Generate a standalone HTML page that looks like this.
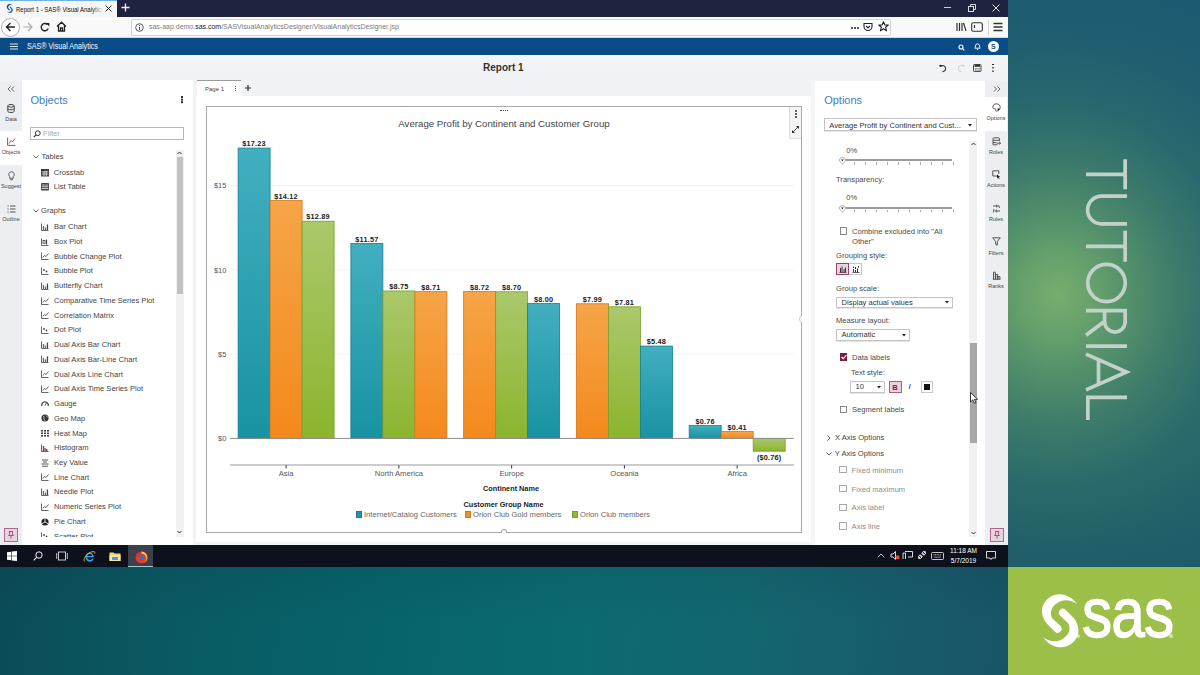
<!DOCTYPE html>
<html><head><meta charset="utf-8">
<style>
*{margin:0;padding:0;box-sizing:border-box}
html,body{width:1200px;height:675px;overflow:hidden}
body{position:relative;font-family:"Liberation Sans",sans-serif;background:#0d5560;color:#333}
.a{position:absolute}
.t{position:absolute;white-space:nowrap;line-height:1}
svg{position:absolute;overflow:visible}
</style></head><body>

<div class="a" style="left:1008px;top:0px;width:192px;height:567px;background:radial-gradient(ellipse 290px 320px at 50px 295px,rgba(118,174,110,1) 0%,rgba(108,166,108,0.93) 12%,rgba(94,155,106,0.78) 26%,rgba(78,140,105,0.58) 42%,rgba(60,124,106,0.36) 60%,rgba(48,110,108,0.15) 80%,rgba(40,100,108,0) 100%),linear-gradient(to bottom,#1c5a71 0%,#1f5d70 25%,#25626e 50%,#22606b 80%,#1e5b68 100%);"></div>
<div class="a" style="left:0px;top:567px;width:1200px;height:108px;background:linear-gradient(to bottom,rgba(10,40,60,0.10) 0%,rgba(10,40,60,0) 50%),linear-gradient(96deg,#0a4c57 0%,#0a5962 14%,#07646b 33%,#0b6a70 48%,#13666f 62%,#18596a 78%,#1a4e60 92%,#1a4b5e 100%);"></div>
<div class="a" style="left:1008px;top:567px;width:192px;height:108px;background:#9cbf4a;"></div>
<div class="a" style="left:0;top:0;width:1008px;height:567px;background:#eef0f3;overflow:hidden">
<!-- tab bar -->
<div class="a" style="left:0;top:0;width:1008px;height:17px;background:#202340"></div>
<div class="a" style="left:0;top:0;width:117px;height:17px;background:#f5f6f7;border-top:1px solid #6fb2e2"></div>
<svg class="a" style="left:5.5px;top:3.8px" width="7.5" height="9" viewBox="-18.5 -27 37 54"><g fill="#1a4f8f"><path d="M16.9,-16.5 C12,-24 4,-27 -2,-26.5 C-12,-25.5 -19,-17 -18.2,-8.5 C-17.8,-3.5 -15.5,0.5 -13,3.2 L-5.3,11 A4,4 0 0 0 0.3,5.3 L-7.5,-2 C-9.5,-4.5 -10,-8 -8.5,-11.5 C-6,-17.5 1,-21 7,-20.5 C11,-20 14.5,-18.5 16.9,-16.5 Z"/><path transform="rotate(180)" fill="#1b6fa8" d="M16.9,-16.5 C12,-24 4,-27 -2,-26.5 C-12,-25.5 -19,-17 -18.2,-8.5 C-17.8,-3.5 -15.5,0.5 -13,3.2 L-5.3,11 A4,4 0 0 0 0.3,5.3 L-7.5,-2 C-9.5,-4.5 -10,-8 -8.5,-11.5 C-6,-17.5 1,-21 7,-20.5 C11,-20 14.5,-18.5 16.9,-16.5 Z"/></g></svg>
<div class="a" style="left:16px;top:3px;width:86px;height:12px;overflow:hidden"><div class="t" style="left:0;top:2.6px;font-size:7.2px;color:#111;transform:scaleX(0.835);transform-origin:0 0">Report 1 - SAS® Visual Analytics</div></div>
<div class="a" style="left:92px;top:2px;width:12px;height:13px;background:linear-gradient(to right,rgba(245,246,247,0),#f5f6f7)"></div>
<svg class="a" style="left:105px;top:5px" width="7" height="7" viewBox="0 0 7 7"><path d="M0.5 0.5L6.5 6.5M6.5 0.5L0.5 6.5" stroke="#222" stroke-width="1"/></svg>
<svg class="a" style="left:121px;top:3px" width="9" height="9" viewBox="0 0 9 9"><path d="M4.5 0.5V8.5M0.5 4.5H8.5" stroke="#eee" stroke-width="1.3"/></svg>
<!-- window controls -->
<div class="a" style="left:944px;top:7px;width:7px;height:1px;background:#ccc"></div>
<svg class="a" style="left:968px;top:4px" width="8" height="8" viewBox="0 0 8 8"><rect x="0.5" y="2.5" width="5" height="5" fill="none" stroke="#ddd" stroke-width="1"/><path d="M2.5 2.5V0.5H7.5V5.5H5.5" fill="none" stroke="#ddd" stroke-width="1"/></svg>
<svg class="a" style="left:992px;top:4px" width="8" height="8" viewBox="0 0 8 8"><path d="M0.5 0.5L7.5 7.5M7.5 0.5L0.5 7.5" stroke="#ddd" stroke-width="1"/></svg>

<!-- nav bar -->
<div class="a" style="left:0;top:17px;width:1008px;height:21px;background:#f9f9fa;border-bottom:1px solid #d7d7db"></div>
<div class="a" style="left:1px;top:18px;width:19px;height:19px;border-radius:50%;border:1px solid #b1b1b3;background:#fff"></div>
<svg class="a" style="left:5px;top:22px" width="11" height="10" viewBox="0 0 11 10"><path d="M10 5H1.5M5.5 1L1.5 5L5.5 9" fill="none" stroke="#222" stroke-width="1.4"/></svg>
<svg class="a" style="left:23px;top:22px" width="11" height="10" viewBox="0 0 11 10"><path d="M0.5 5H9M5 1L9 5L5 9" fill="none" stroke="#aaa" stroke-width="1.1"/></svg>
<svg class="a" style="left:40px;top:22px" width="11" height="11" viewBox="0 0 11 11"><path d="M8.2 6.5A3.6 3.6 0 1 1 7.4 2.6" fill="none" stroke="#222" stroke-width="1.4"/><path d="M5.8 1H9.4V4.6Z" fill="#222"/></svg>
<svg class="a" style="left:56px;top:21px" width="11" height="11" viewBox="0 0 11 11"><path d="M1 5.5L5.5 1.2L10 5.5M2.5 4.5V10H8.5V4.5M4.5 10V7H6.5V10" fill="none" stroke="#222" stroke-width="1.3"/></svg>
<div class="a" style="left:131px;top:19px;width:760px;height:17px;background:#fff;border:1px solid #d4d4d6;border-radius:2px"></div>
<svg class="a" style="left:135px;top:23px" width="9" height="9" viewBox="0 0 9 9"><circle cx="4.5" cy="4.5" r="3.8" fill="none" stroke="#555" stroke-width="1"/><path d="M4.5 3.8V7" stroke="#555" stroke-width="1.1"/><circle cx="4.5" cy="2.4" r="0.6" fill="#555"/></svg>
<div class="t" style="left:148.5px;top:23.4px;font-size:7.8px;color:#7a7a7a;transform:scaleX(0.895);transform-origin:0 0">sas-aap.demo.<span style="color:#222">sas.com</span>/SASVisualAnalyticsDesigner/VisualAnalyticsDesigner.jsp</div>
<div class="a" style="left:851px;top:26.5px;width:2px;height:2px;border-radius:1px;background:#222;box-shadow:3px 0 0 #222,6px 0 0 #222"></div>
<svg class="a" style="left:863px;top:22px" width="10" height="10" viewBox="0 0 10 10"><path d="M1 1.5H9V4.5A4 4 0 0 1 1 4.5Z" fill="none" stroke="#222" stroke-width="1.1"/><path d="M3 4L5 6L7 4" fill="none" stroke="#222" stroke-width="1.1"/></svg>
<svg class="a" style="left:878px;top:21px" width="11" height="11" viewBox="0 0 11 11"><path d="M5.5 0.8L6.9 4H10.3L7.6 6.2L8.6 9.8L5.5 7.8L2.4 9.8L3.4 6.2L0.7 4H4.1Z" fill="none" stroke="#222" stroke-width="1.1" stroke-linejoin="round"/></svg>
<svg class="a" style="left:956px;top:22px" width="11" height="10" viewBox="0 0 11 10"><path d="M1 1V9M3.5 1V9M6 1V9M7.5 1L10 9" fill="none" stroke="#333" stroke-width="1.2"/></svg>
<svg class="a" style="left:971px;top:22px" width="12" height="10" viewBox="0 0 12 10"><rect x="0.7" y="0.7" width="10.6" height="8.6" rx="1.5" fill="none" stroke="#333" stroke-width="1.1"/><path d="M3.5 3V6" stroke="#333" stroke-width="1.2"/></svg>
<div class="a" style="left:988px;top:20px;width:1px;height:15px;background:#d7d7db"></div>
<svg class="a" style="left:993px;top:22px" width="10" height="10" viewBox="0 0 10 10"><path d="M0.5 1.5H9.5M0.5 5H9.5M0.5 8.5H9.5" stroke="#333" stroke-width="1.3"/></svg>

<!-- SAS header -->
<div class="a" style="left:0;top:38px;width:1008px;height:17px;background:#0a4c87"></div>
<svg class="a" style="left:10px;top:43px" width="8" height="7" viewBox="0 0 8 7"><path d="M0 1H8M0 3.5H8M0 6H8" stroke="#dfe8f2" stroke-width="1.1"/></svg>
<div class="t" style="left:27px;top:43.4px;font-size:8.2px;color:#fff;transform:scaleX(0.87);transform-origin:0 0">SAS® Visual Analytics</div>
<svg class="a" style="left:958px;top:43.5px" width="7" height="7" viewBox="0 0 7 7"><circle cx="3" cy="3" r="2" fill="none" stroke="#fff" stroke-width="1.1"/><path d="M4.4 4.4L6.3 6.3" stroke="#fff" stroke-width="1.2"/></svg>
<svg class="a" style="left:974px;top:42.8px" width="7" height="7" viewBox="0 0 7 7"><path d="M0.8 5.2H6.2L5.6 4.2V3A2.1 2.1 0 0 0 1.4 3V4.2Z" fill="none" stroke="#fff" stroke-width="0.9"/><circle cx="3.5" cy="6.2" r="0.7" fill="#fff"/></svg>
<div class="a" style="left:988px;top:41px;width:11px;height:11px;border-radius:50%;background:#fff"></div>
<div class="t" style="left:991px;top:43px;font-size:7px;color:#0b4f8b;font-weight:bold">S</div>

<!-- report bar -->
<div class="a" style="left:0;top:55px;width:1008px;height:25px;background:linear-gradient(to bottom,#fafbfc 0px,#f3f4f6 2px,#f1f2f5 25px)"></div>
<div class="t" style="left:483px;top:63.1px;font-size:10px;color:#333;font-weight:bold">Report 1</div>
<svg class="a" style="left:939px;top:64px" width="9" height="8" viewBox="0 0 9 8"><path d="M1.8 2.2A3 3 0 1 1 3.5 7.6" fill="none" stroke="#333" stroke-width="1.1"/><circle cx="1.4" cy="1.8" r="1.1" fill="#222"/></svg>
<svg class="a" style="left:956px;top:64px" width="9" height="8" viewBox="0 0 9 8"><path d="M7.2 2.2A3 3 0 1 0 5.5 7.6" fill="none" stroke="#d4d4d4" stroke-width="1.1"/><circle cx="7.6" cy="1.8" r="1" fill="#ccc"/></svg>
<svg class="a" style="left:972.5px;top:64px" width="8.5" height="8" viewBox="0 0 8.5 8"><rect x="0.5" y="0.5" width="7.5" height="7" rx="0.8" fill="#eee" stroke="#444" stroke-width="1"/><rect x="1.5" y="1" width="5.5" height="1.8" fill="#333"/><rect x="2.3" y="4.3" width="3.9" height="2.7" fill="#d8c8d0" stroke="#777" stroke-width="0.5"/></svg>
<div class="a" style="left:992.3px;top:63.8px;width:1.6px;height:1.6px;background:#222;box-shadow:0 3.3px 0 #222,0 6.6px 0 #222"></div>


<div class="a" style="left:0px;top:80px;width:1008px;height:465px;background:#f1f2f5;"></div>
<div class="a" style="left:0px;top:81px;width:22px;height:464px;background:#eceef1;"></div>
<div class="a" style="left:0px;top:131px;width:22px;height:34px;background:#ffffff;"></div>
<svg style="left:7px;top:86px" width="8" height="6" viewBox="0 0 8 6"><path d="M3.5 0.5L1 3L3.5 5.5M7 0.5L4.5 3L7 5.5" fill="none" stroke="#555" stroke-width="0.9"/></svg>
<svg style="left:7px;top:104px" width="8" height="9" viewBox="0 0 8 9"><ellipse cx="4" cy="1.8" rx="3.2" ry="1.3" fill="none" stroke="#444" stroke-width="1"/><path d="M0.8 1.8V7.2C0.8 8.9 7.2 8.9 7.2 7.2V1.8M0.8 4.5C0.8 6.2 7.2 6.2 7.2 4.5" fill="none" stroke="#444" stroke-width="1"/></svg>
<div class="t" style="left:-289.00px;width:600px;text-align:center;top:116.84px;font-size:5.5px;color:#444;font-weight:normal;">Data</div>
<svg style="left:7px;top:137px" width="9" height="9" viewBox="0 0 9 9"><path d="M0.6 0.5V8.4H8.5" fill="none" stroke="#555" stroke-width="0.9"/><path d="M2 6.5L4 3.5L5.5 5L8 1.5" fill="none" stroke="#b04070" stroke-width="0.9"/></svg>
<div class="t" style="left:-289.00px;width:600px;text-align:center;top:150.34px;font-size:5.5px;color:#444;font-weight:normal;">Objects</div>
<svg style="left:8px;top:171px" width="7" height="10" viewBox="0 0 7 10"><path d="M3.5 0.7A2.8 2.8 0 0 1 5.3 5.6V7.3H1.7V5.6A2.8 2.8 0 0 1 3.5 0.7Z" fill="none" stroke="#555" stroke-width="0.9"/><path d="M2 8.7H5" stroke="#555" stroke-width="0.9"/></svg>
<div class="t" style="left:-289.00px;width:600px;text-align:center;top:183.84px;font-size:5.5px;color:#444;font-weight:normal;">Suggest</div>
<svg style="left:7px;top:205px" width="9" height="8" viewBox="0 0 9 8"><path d="M0.5 1H1.7M0.5 4H1.7M0.5 7H1.7M3 1H8.5M3 4H8.5M3 7H8.5" stroke="#555" stroke-width="1"/></svg>
<div class="t" style="left:-289.00px;width:600px;text-align:center;top:217.34px;font-size:5.5px;color:#444;font-weight:normal;">Outline</div>
<div class="a" style="left:4px;top:528px;width:14px;height:14px;background:#e8d3e0;border:1px solid #b0688f"></div>
<svg style="left:8px;top:531px" width="6" height="8" viewBox="0 0 6 8"><path d="M1 0.5H5M1.5 0.5V3.5L0.5 4.5H5.5L4.5 3.5V0.5M3 4.5V7.5" fill="none" stroke="#8a3a64" stroke-width="0.8"/></svg>
<div class="a" style="left:22px;top:80px;width:171px;height:465px;background:#ffffff;"></div>
<div class="a" style="left:193px;top:80px;width:3px;height:465px;background:#f0f2f4;"></div>
<div class="t" style="left:30.50px;top:95.09px;font-size:11px;color:#3c7cbd;font-weight:normal;">Objects</div>
<div class="a" style="left:181.2px;top:96.3px;width:1.6px;height:1.6px;background:#333;box-shadow:0 2.6px 0 #333,0 5.2px 0 #333"></div>
<div class="a" style="left:30px;top:127px;width:154px;height:13px;border:1px solid #b8b8b8;background:#fff"></div>
<svg style="left:33px;top:129.5px" width="8" height="8" viewBox="0 0 8 8"><circle cx="4.8" cy="3.2" r="2.4" fill="none" stroke="#333" stroke-width="1"/><path d="M3.1 4.9L0.8 7.2" stroke="#333" stroke-width="1.2"/></svg>
<div class="t" style="left:43.00px;top:130.07px;font-size:7.6px;color:#aaa;font-weight:normal;">Filter</div>
<svg style="left:32.5px;top:155px" width="6" height="4" viewBox="0 0 6 4"><path d="M0.5 0.5L3 3L5.5 0.5" fill="none" stroke="#555" stroke-width="0.9"/></svg>
<div class="t" style="left:41.50px;top:153.17px;font-size:7.6px;color:#444;font-weight:normal;">Tables</div>
<svg style="left:41px;top:168.5px" width="8" height="7.5" viewBox="0 0 8 7.5"><rect x="0" y="0" width="8" height="7.5" fill="#444"/><path d="M0.8 2.8H7.2M0.8 5H7.2M3 2V7M5.3 2V7" stroke="#fff" stroke-width="0.7"/><rect x="0.7" y="0.7" width="2" height="1.3" fill="#111"/></svg>
<div class="t" style="left:53.80px;top:168.57px;font-size:7.6px;color:#444;font-weight:normal;">Crosstab</div>
<svg style="left:41px;top:183px" width="8" height="7.5" viewBox="0 0 8 7.5"><rect x="0" y="0" width="8" height="7.5" rx="0.8" fill="#444"/><path d="M0.8 2.1H7.2M0.8 3.8H7.2M0.8 5.5H7.2" stroke="#fff" stroke-width="0.7"/></svg>
<div class="t" style="left:53.80px;top:183.17px;font-size:7.6px;color:#444;font-weight:normal;">List Table</div>
<svg style="left:32.5px;top:209px" width="6" height="4" viewBox="0 0 6 4"><path d="M0.5 0.5L3 3L5.5 0.5" fill="none" stroke="#555" stroke-width="0.9"/></svg>
<div class="t" style="left:41.00px;top:207.27px;font-size:7.6px;color:#444;font-weight:normal;">Graphs</div>
<svg style="left:41px;top:222.80px" width="8" height="8" viewBox="0 0 8 8"><path d="M0.5 0.5V7.5H7.5" fill="none" stroke="#555" stroke-width="0.9"/><rect x="1.8" y="3" width="1.3" height="4" fill="#b04070"/><rect x="3.8" y="4.5" width="1.3" height="2.5" fill="#3a7ab8"/><rect x="5.8" y="1.5" width="1.3" height="5.5" fill="#444"/></svg>
<div class="t" style="left:54.00px;top:223.17px;font-size:7.6px;color:#444;font-weight:normal;">Bar Chart</div>
<svg style="left:41px;top:237.54px" width="8" height="8" viewBox="0 0 8 8"><path d="M0.5 0.5V7.5H7.5" fill="none" stroke="#555" stroke-width="0.9"/><rect x="2" y="2.5" width="2" height="3" fill="none" stroke="#444" stroke-width="0.8"/><path d="M5.5 1.5V6.5" stroke="#444" stroke-width="1.2"/></svg>
<div class="t" style="left:54.00px;top:237.91px;font-size:7.6px;color:#444;font-weight:normal;">Box Plot</div>
<svg style="left:41px;top:252.28px" width="8" height="8" viewBox="0 0 8 8"><path d="M0.5 0.5V7.5H7.5" fill="none" stroke="#555" stroke-width="0.9"/><path d="M1.8 5.5L3.5 3.5L5 4.5L7.5 1.5" fill="none" stroke="#555" stroke-width="0.9"/></svg>
<div class="t" style="left:54.00px;top:252.65px;font-size:7.6px;color:#444;font-weight:normal;">Bubble Change Plot</div>
<svg style="left:41px;top:267.02px" width="8" height="8" viewBox="0 0 8 8"><path d="M0.5 0.5V7.5H7.5" fill="none" stroke="#555" stroke-width="0.9"/><circle cx="3" cy="3" r="0.9" fill="#444"/><circle cx="5.5" cy="4.5" r="0.9" fill="#444"/></svg>
<div class="t" style="left:54.00px;top:267.39px;font-size:7.6px;color:#444;font-weight:normal;">Bubble Plot</div>
<svg style="left:41px;top:281.76px" width="8" height="8" viewBox="0 0 8 8"><path d="M0.5 0.5V7.5H7.5" fill="none" stroke="#555" stroke-width="0.9"/><rect x="1.8" y="3" width="1.3" height="4" fill="#b04070"/><rect x="3.8" y="4.5" width="1.3" height="2.5" fill="#3a7ab8"/><rect x="5.8" y="1.5" width="1.3" height="5.5" fill="#444"/></svg>
<div class="t" style="left:54.00px;top:282.13px;font-size:7.6px;color:#444;font-weight:normal;">Butterfly Chart</div>
<svg style="left:41px;top:296.50px" width="8" height="8" viewBox="0 0 8 8"><path d="M0.5 0.5V7.5H7.5" fill="none" stroke="#555" stroke-width="0.9"/><path d="M1.8 5.5L3.5 3.5L5 4.5L7.5 1.5" fill="none" stroke="#555" stroke-width="0.9"/></svg>
<div class="t" style="left:54.00px;top:296.87px;font-size:7.6px;color:#444;font-weight:normal;">Comparative Time Series Plot</div>
<svg style="left:41px;top:311.24px" width="8" height="8" viewBox="0 0 8 8"><path d="M0.5 0.5V7.5H7.5" fill="none" stroke="#555" stroke-width="0.9"/><path d="M1.8 5.5L3.5 3.5L5 4.5L7.5 1.5" fill="none" stroke="#555" stroke-width="0.9"/></svg>
<div class="t" style="left:54.00px;top:311.61px;font-size:7.6px;color:#444;font-weight:normal;">Correlation Matrix</div>
<svg style="left:41px;top:325.98px" width="8" height="8" viewBox="0 0 8 8"><path d="M0.5 0.5V7.5H7.5" fill="none" stroke="#555" stroke-width="0.9"/><circle cx="3" cy="3" r="0.9" fill="#444"/><circle cx="5.5" cy="4.5" r="0.9" fill="#444"/></svg>
<div class="t" style="left:54.00px;top:326.35px;font-size:7.6px;color:#444;font-weight:normal;">Dot Plot</div>
<svg style="left:41px;top:340.72px" width="8" height="8" viewBox="0 0 8 8"><path d="M0.5 0.5V7.5H7.5" fill="none" stroke="#555" stroke-width="0.9"/><rect x="1.8" y="3" width="1.3" height="4" fill="#b04070"/><rect x="3.8" y="4.5" width="1.3" height="2.5" fill="#3a7ab8"/><rect x="5.8" y="1.5" width="1.3" height="5.5" fill="#444"/></svg>
<div class="t" style="left:54.00px;top:341.09px;font-size:7.6px;color:#444;font-weight:normal;">Dual Axis Bar Chart</div>
<svg style="left:41px;top:355.46px" width="8" height="8" viewBox="0 0 8 8"><path d="M0.5 0.5V7.5H7.5" fill="none" stroke="#555" stroke-width="0.9"/><rect x="1.8" y="3" width="1.3" height="4" fill="#b04070"/><rect x="3.8" y="4.5" width="1.3" height="2.5" fill="#3a7ab8"/><rect x="5.8" y="1.5" width="1.3" height="5.5" fill="#444"/></svg>
<div class="t" style="left:54.00px;top:355.83px;font-size:7.6px;color:#444;font-weight:normal;">Dual Axis Bar-Line Chart</div>
<svg style="left:41px;top:370.20px" width="8" height="8" viewBox="0 0 8 8"><path d="M0.5 0.5V7.5H7.5" fill="none" stroke="#555" stroke-width="0.9"/><path d="M1.8 5.5L3.5 3.5L5 4.5L7.5 1.5" fill="none" stroke="#555" stroke-width="0.9"/></svg>
<div class="t" style="left:54.00px;top:370.57px;font-size:7.6px;color:#444;font-weight:normal;">Dual Axis Line Chart</div>
<svg style="left:41px;top:384.94px" width="8" height="8" viewBox="0 0 8 8"><path d="M0.5 0.5V7.5H7.5" fill="none" stroke="#555" stroke-width="0.9"/><path d="M1.8 5.5L3.5 3.5L5 4.5L7.5 1.5" fill="none" stroke="#555" stroke-width="0.9"/></svg>
<div class="t" style="left:54.00px;top:385.31px;font-size:7.6px;color:#444;font-weight:normal;">Dual Axis Time Series Plot</div>
<svg style="left:41px;top:399.68px" width="8" height="8" viewBox="0 0 8 8"><path d="M0.8 6A3.3 3.3 0 1 1 7.2 6" fill="none" stroke="#444" stroke-width="1.3"/><path d="M4 5.5L5.5 3" stroke="#444" stroke-width="0.9"/></svg>
<div class="t" style="left:54.00px;top:400.05px;font-size:7.6px;color:#444;font-weight:normal;">Gauge</div>
<svg style="left:41px;top:414.42px" width="8" height="8" viewBox="0 0 8 8"><circle cx="4" cy="4" r="3.6" fill="#333"/><path d="M2 2.5C3 2 3.5 3.5 2.8 4.5C2.5 5.5 4 6 4.5 7M5 1.5C5.5 2.5 6.5 2.5 6.8 3.5" fill="none" stroke="#fff" stroke-width="0.7"/></svg>
<div class="t" style="left:54.00px;top:414.79px;font-size:7.6px;color:#444;font-weight:normal;">Geo Map</div>
<svg style="left:41px;top:429.16px" width="8" height="8" viewBox="0 0 8 8"><g fill="#444"><rect x="0" y="1" width="2" height="1.6"/><rect x="3" y="1" width="2" height="1.6"/><rect x="6" y="1" width="2" height="1.6"/><rect x="0" y="3.5" width="2" height="1.6"/><rect x="3" y="3.5" width="2" height="1.6"/><rect x="6" y="3.5" width="2" height="1.6"/><rect x="0" y="6" width="2" height="1.6"/><rect x="3" y="6" width="2" height="1.6"/><rect x="6" y="6" width="2" height="1.6"/></g></svg>
<div class="t" style="left:54.00px;top:429.53px;font-size:7.6px;color:#444;font-weight:normal;">Heat Map</div>
<svg style="left:41px;top:443.90px" width="8" height="8" viewBox="0 0 8 8"><path d="M0.5 0.5V7.5H7.5" fill="none" stroke="#555" stroke-width="0.9"/><rect x="1.8" y="2" width="1.4" height="5" fill="#555"/><rect x="3.4" y="4" width="1.4" height="3" fill="#b04070"/><rect x="5" y="5" width="1.4" height="2" fill="#555"/></svg>
<div class="t" style="left:54.00px;top:444.27px;font-size:7.6px;color:#444;font-weight:normal;">Histogram</div>
<svg style="left:41px;top:458.64px" width="8" height="8" viewBox="0 0 8 8"><path d="M1 1H7M2 3H6M0.5 5H7.5M1 7.2H7" stroke="#444" stroke-width="0.9"/></svg>
<div class="t" style="left:54.00px;top:459.01px;font-size:7.6px;color:#444;font-weight:normal;">Key Value</div>
<svg style="left:41px;top:473.38px" width="8" height="8" viewBox="0 0 8 8"><path d="M0.5 0.5V7.5H7.5" fill="none" stroke="#555" stroke-width="0.9"/><path d="M1.8 5.5L3.5 3.5L5 4.5L7.5 1.5" fill="none" stroke="#555" stroke-width="0.9"/></svg>
<div class="t" style="left:54.00px;top:473.75px;font-size:7.6px;color:#444;font-weight:normal;">Line Chart</div>
<svg style="left:41px;top:488.12px" width="8" height="8" viewBox="0 0 8 8"><path d="M0.5 0.5V7.5H7.5" fill="none" stroke="#555" stroke-width="0.9"/><rect x="1.8" y="3" width="1.3" height="4" fill="#b04070"/><rect x="3.8" y="4.5" width="1.3" height="2.5" fill="#3a7ab8"/><rect x="5.8" y="1.5" width="1.3" height="5.5" fill="#444"/></svg>
<div class="t" style="left:54.00px;top:488.49px;font-size:7.6px;color:#444;font-weight:normal;">Needle Plot</div>
<svg style="left:41px;top:502.86px" width="8" height="8" viewBox="0 0 8 8"><path d="M0.5 0.5V7.5H7.5" fill="none" stroke="#555" stroke-width="0.9"/><path d="M1.8 5.5L3.5 3.5L5 4.5L7.5 1.5" fill="none" stroke="#555" stroke-width="0.9"/></svg>
<div class="t" style="left:54.00px;top:503.23px;font-size:7.6px;color:#444;font-weight:normal;">Numeric Series Plot</div>
<svg style="left:41px;top:517.60px" width="8" height="8" viewBox="0 0 8 8"><circle cx="4" cy="4" r="3.6" fill="#222"/><path d="M4 4V0.4M4 4L7.2 5.8M4 4L0.8 5.8" stroke="#fff" stroke-width="0.8"/></svg>
<div class="t" style="left:54.00px;top:517.97px;font-size:7.6px;color:#444;font-weight:normal;">Pie Chart</div>
<svg style="left:41px;top:532.34px" width="8" height="8" viewBox="0 0 8 8"><path d="M0.5 0.5V7.5H7.5" fill="none" stroke="#555" stroke-width="0.9"/><circle cx="3" cy="3" r="0.9" fill="#444"/><circle cx="5.5" cy="4.5" r="0.9" fill="#444"/></svg>
<div class="t" style="left:54.00px;top:532.71px;font-size:7.6px;color:#444;font-weight:normal;">Scatter Plot</div>
<div class="a" style="left:22px;top:536.5px;width:171px;height:8.5px;background:#ffffff;"></div>
<div class="a" style="left:175.5px;top:149.5px;width:8px;height:387px;background:#f1f1f1;"></div>
<svg style="left:177px;top:151px" width="5" height="4" viewBox="0 0 5 4"><path d="M0.5 3L2.5 1L4.5 3" fill="none" stroke="#333" stroke-width="1"/></svg>
<div class="a" style="left:176.5px;top:157px;width:6px;height:137px;background:#c1c1c1;"></div>
<svg style="left:177px;top:530px" width="5" height="4" viewBox="0 0 5 4"><path d="M0.5 1L2.5 3L4.5 1" fill="none" stroke="#333" stroke-width="1"/></svg>
<div class="a" style="left:196px;top:80px;width:615px;height:16px;background:#f1f2f5;"></div>
<div class="a" style="left:197px;top:80px;width:44px;height:17px;background:#fff;border-top:1.5px solid #9a9a9a"></div>
<div class="t" style="left:205.00px;top:86.42px;font-size:6px;color:#444;font-weight:normal;">Page 1</div>
<div class="a" style="left:234.5px;top:86px;width:1px;height:1px;background:#666;box-shadow:0 2px 0 #666,0 4px 0 #666"></div>
<svg style="left:244.5px;top:85px" width="6" height="6" viewBox="0 0 6 6"><path d="M3 0V6M0 3H6" stroke="#333" stroke-width="1.2"/></svg>
<div class="a" style="left:196px;top:96px;width:615px;height:446px;background:#ffffff;"></div>
<div class="a" style="left:811px;top:80px;width:4px;height:465px;background:#f4f5f7;"></div>
<div class="a" style="left:815px;top:81px;width:170px;height:464px;background:#ffffff;"></div>
<div class="a" style="left:985px;top:81px;width:23px;height:464px;background:#eceef1;"></div>
<div class="a" style="left:985px;top:97px;width:22px;height:34px;background:#ffffff;"></div>
<svg style="left:993px;top:86px" width="8" height="6" viewBox="0 0 8 6"><path d="M1 0.5L3.5 3L1 5.5M4.5 0.5L7 3L4.5 5.5" fill="none" stroke="#555" stroke-width="0.9"/></svg>
<svg style="left:992px;top:103px" width="9" height="9" viewBox="0 0 9 9"><path d="M4.5 0.8C2.2 0.8 0.8 2.4 0.8 4.3C0.8 5.5 1.7 5.8 2.5 5.6C3.4 5.4 3.8 6.2 3.6 7C3.4 7.8 4 8.3 4.8 8.1C7 7.6 8.2 6 8.2 4.3C8.2 2.2 6.6 0.8 4.5 0.8Z" fill="none" stroke="#444" stroke-width="0.9"/><circle cx="6.5" cy="6.3" r="1" fill="#222"/></svg>
<div class="t" style="left:696.00px;width:600px;text-align:center;top:116.34px;font-size:5.5px;color:#444;font-weight:normal;">Options</div>
<svg style="left:992px;top:137px" width="9" height="9" viewBox="0 0 9 9"><path d="M5.5 7.8H1V1.5A1 1 0 0 1 2 0.8H6.5A1 1 0 0 1 7.5 1.8V3.5M1 3.3H7.5M1 5.6H4.5" fill="none" stroke="#444" stroke-width="0.9"/><path d="M4.8 6.2H8.5M7.2 4.8L8.6 6.2L7.2 7.6" fill="none" stroke="#444" stroke-width="0.9"/></svg>
<div class="t" style="left:696.00px;width:600px;text-align:center;top:149.84px;font-size:5.5px;color:#444;font-weight:normal;">Roles</div>
<svg style="left:992px;top:170px" width="9" height="10" viewBox="0 0 9 10"><path d="M5.5 6H0.8V0.8H6.8V4" fill="none" stroke="#444" stroke-width="0.9"/><path d="M5 4.5L8.2 6.8L6.7 7L7.6 9L7 9.3L6 7.4L5 8.5Z" fill="#222"/></svg>
<div class="t" style="left:696.00px;width:600px;text-align:center;top:183.34px;font-size:5.5px;color:#444;font-weight:normal;">Actions</div>
<svg style="left:992px;top:204px" width="9" height="9" viewBox="0 0 9 9"><path d="M1 2H5.5M4 0.7L5.5 2L4 3.3M8 7H3.5M5 5.7L3.5 7L5 8.3" fill="none" stroke="#444" stroke-width="0.9"/><path d="M6.5 1L7.5 4M2 5L1.5 8.5" stroke="#444" stroke-width="0.9"/></svg>
<div class="t" style="left:696.00px;width:600px;text-align:center;top:217.34px;font-size:5.5px;color:#444;font-weight:normal;">Rules</div>
<svg style="left:992px;top:237px" width="9" height="9" viewBox="0 0 9 9"><path d="M0.7 0.8H8.3L5.3 4.5V8.2L3.7 7.3V4.5Z" fill="none" stroke="#444" stroke-width="0.9" stroke-linejoin="round"/></svg>
<div class="t" style="left:696.00px;width:600px;text-align:center;top:250.84px;font-size:5.5px;color:#444;font-weight:normal;">Filters</div>
<svg style="left:992px;top:271px" width="9" height="9" viewBox="0 0 9 9"><path d="M0.8 8.3H8.5M1.5 8V1.2H3.3V8M3.8 8V3.5H5.6V8M6.1 8V5.5H7.9V8" fill="none" stroke="#444" stroke-width="0.9"/></svg>
<div class="t" style="left:696.00px;width:600px;text-align:center;top:284.34px;font-size:5.5px;color:#444;font-weight:normal;">Ranks</div>
<div class="a" style="left:990px;top:528px;width:14px;height:14px;background:#e8d3e0;border:1px solid #b0688f"></div>
<svg style="left:994px;top:531px" width="6" height="8" viewBox="0 0 6 8"><path d="M1 0.5H5M1.5 0.5V3.5L0.5 4.5H5.5L4.5 3.5V0.5M3 4.5V7.5" fill="none" stroke="#8a3a64" stroke-width="0.8"/></svg>
<div class="a" style="left:206px;top:106px;width:596px;height:427px;border:1px solid #a9a9a9;background:#fff"></div>
<div class="a" style="left:500px;top:109.5px;width:8px;height:1px;border-top:1px dotted #555"></div>
<div class="a" style="left:788.5px;top:107px;width:12.5px;height:32px;background:#f4f4f4;border-left:1px solid #ddd;border-bottom:1px solid #ddd"></div>
<div class="a" style="left:794.5px;top:110px;width:2px;height:2px;background:#333;border-radius:1px;box-shadow:0 3px 0 #333,0 6px 0 #333"></div>
<svg style="left:790.5px;top:125px" width="9" height="9" viewBox="0 0 9 9"><path d="M1.5 7.5L7.5 1.5" stroke="#333" stroke-width="0.9"/><path d="M5 1H8V4Z M1 5V8H4Z" fill="#333"/></svg>
<div class="a" style="left:800.5px;top:316.3px;width:2px;height:5.4px;background:#fff"></div><svg style="left:798px;top:315px" width="5" height="8" viewBox="0 0 5 8"><path d="M3.5 0.8L1.8 2.2V5.6L3.5 7" fill="none" stroke="#bbb" stroke-width="0.9"/></svg>
<div class="a" style="left:501px;top:529px;width:6px;height:4px;background:#fff;border:1px solid #aaa;border-bottom:none;border-radius:3px 3px 0 0"></div>
<svg style="left:0;top:0" width="1008" height="567" viewBox="0 0 1008 567">
<defs>
<linearGradient id="gT" x1="0" y1="0" x2="0" y2="1"><stop offset="0" stop-color="#42afbf"/><stop offset="1" stop-color="#1892a2"/></linearGradient>
<linearGradient id="gO" x1="0" y1="0" x2="0" y2="1"><stop offset="0" stop-color="#f5a548"/><stop offset="1" stop-color="#f4891c"/></linearGradient>
<linearGradient id="gG" x1="0" y1="0" x2="0" y2="1"><stop offset="0" stop-color="#abc86b"/><stop offset="1" stop-color="#8cb42e"/></linearGradient>
</defs>
<line x1="230" y1="354.15" x2="794" y2="354.15" stroke="#ececec" stroke-width="0.8"/>
<line x1="230" y1="269.90" x2="794" y2="269.90" stroke="#ececec" stroke-width="0.8"/>
<line x1="230" y1="185.65" x2="794" y2="185.65" stroke="#ececec" stroke-width="0.8"/>
<rect x="238.10" y="148.07" width="32.00" height="290.33" fill="url(#gT)" stroke="#157f8e" stroke-width="0.8"/>
<rect x="270.10" y="200.48" width="32.00" height="237.92" fill="url(#gO)" stroke="#d9741a" stroke-width="0.8"/>
<rect x="302.10" y="221.20" width="32.00" height="217.20" fill="url(#gG)" stroke="#77a02a" stroke-width="0.8"/>
<line x1="286.10" y1="465" x2="286.10" y2="468.5" stroke="#333" stroke-width="1"/>
<rect x="350.87" y="243.45" width="32.00" height="194.95" fill="url(#gT)" stroke="#157f8e" stroke-width="0.8"/>
<rect x="382.87" y="290.96" width="32.00" height="147.44" fill="url(#gG)" stroke="#77a02a" stroke-width="0.8"/>
<rect x="414.87" y="291.64" width="32.00" height="146.76" fill="url(#gO)" stroke="#d9741a" stroke-width="0.8"/>
<line x1="398.87" y1="465" x2="398.87" y2="468.5" stroke="#333" stroke-width="1"/>
<rect x="463.64" y="291.47" width="32.00" height="146.93" fill="url(#gO)" stroke="#d9741a" stroke-width="0.8"/>
<rect x="495.64" y="291.80" width="32.00" height="146.59" fill="url(#gG)" stroke="#77a02a" stroke-width="0.8"/>
<rect x="527.64" y="303.60" width="32.00" height="134.80" fill="url(#gT)" stroke="#157f8e" stroke-width="0.8"/>
<line x1="511.64" y1="465" x2="511.64" y2="468.5" stroke="#333" stroke-width="1"/>
<rect x="576.41" y="303.77" width="32.00" height="134.63" fill="url(#gO)" stroke="#d9741a" stroke-width="0.8"/>
<rect x="608.41" y="306.80" width="32.00" height="131.60" fill="url(#gG)" stroke="#77a02a" stroke-width="0.8"/>
<rect x="640.41" y="346.06" width="32.00" height="92.34" fill="url(#gT)" stroke="#157f8e" stroke-width="0.8"/>
<line x1="624.41" y1="465" x2="624.41" y2="468.5" stroke="#333" stroke-width="1"/>
<rect x="689.18" y="425.59" width="32.00" height="12.81" fill="url(#gT)" stroke="#157f8e" stroke-width="0.8"/>
<rect x="721.18" y="431.49" width="32.00" height="6.91" fill="url(#gO)" stroke="#d9741a" stroke-width="0.8"/>
<rect x="753.18" y="438.40" width="32.00" height="12.81" fill="url(#gG)" stroke="#77a02a" stroke-width="0.8"/>
<line x1="737.18" y1="465" x2="737.18" y2="468.5" stroke="#333" stroke-width="1"/>
<line x1="230" y1="438.4" x2="794" y2="438.4" stroke="#8c8c8c" stroke-width="1"/>
<line x1="230" y1="465" x2="794" y2="465" stroke="#9a9a9a" stroke-width="1.2"/>
</svg>
<div class="t" style="left:-45.90px;width:600px;text-align:center;top:140.30px;font-size:7.3px;color:#1a1a1a;font-weight:bold;letter-spacing:0.2px;">$17.23</div>
<div class="t" style="left:-13.90px;width:600px;text-align:center;top:192.70px;font-size:7.3px;color:#1a1a1a;font-weight:bold;letter-spacing:0.2px;">$14.12</div>
<div class="t" style="left:18.10px;width:600px;text-align:center;top:213.42px;font-size:7.3px;color:#1a1a1a;font-weight:bold;letter-spacing:0.2px;">$12.89</div>
<div class="t" style="left:-13.90px;width:600px;text-align:center;top:470.47px;font-size:7.6px;color:#555;font-weight:normal;">Asia</div>
<div class="t" style="left:66.87px;width:600px;text-align:center;top:235.67px;font-size:7.3px;color:#1a1a1a;font-weight:bold;letter-spacing:0.2px;">$11.57</div>
<div class="t" style="left:98.87px;width:600px;text-align:center;top:283.18px;font-size:7.3px;color:#1a1a1a;font-weight:bold;letter-spacing:0.2px;">$8.75</div>
<div class="t" style="left:130.87px;width:600px;text-align:center;top:283.86px;font-size:7.3px;color:#1a1a1a;font-weight:bold;letter-spacing:0.2px;">$8.71</div>
<div class="t" style="left:98.87px;width:600px;text-align:center;top:470.47px;font-size:7.6px;color:#555;font-weight:normal;">North America</div>
<div class="t" style="left:179.64px;width:600px;text-align:center;top:283.69px;font-size:7.3px;color:#1a1a1a;font-weight:bold;letter-spacing:0.2px;">$8.72</div>
<div class="t" style="left:211.64px;width:600px;text-align:center;top:284.03px;font-size:7.3px;color:#1a1a1a;font-weight:bold;letter-spacing:0.2px;">$8.70</div>
<div class="t" style="left:243.64px;width:600px;text-align:center;top:295.82px;font-size:7.3px;color:#1a1a1a;font-weight:bold;letter-spacing:0.2px;">$8.00</div>
<div class="t" style="left:211.64px;width:600px;text-align:center;top:470.47px;font-size:7.6px;color:#555;font-weight:normal;">Europe</div>
<div class="t" style="left:292.41px;width:600px;text-align:center;top:295.99px;font-size:7.3px;color:#1a1a1a;font-weight:bold;letter-spacing:0.2px;">$7.99</div>
<div class="t" style="left:324.41px;width:600px;text-align:center;top:299.02px;font-size:7.3px;color:#1a1a1a;font-weight:bold;letter-spacing:0.2px;">$7.81</div>
<div class="t" style="left:356.41px;width:600px;text-align:center;top:338.28px;font-size:7.3px;color:#1a1a1a;font-weight:bold;letter-spacing:0.2px;">$5.48</div>
<div class="t" style="left:324.41px;width:600px;text-align:center;top:470.47px;font-size:7.6px;color:#555;font-weight:normal;">Oceania</div>
<div class="t" style="left:405.18px;width:600px;text-align:center;top:417.81px;font-size:7.3px;color:#1a1a1a;font-weight:bold;letter-spacing:0.2px;">$0.76</div>
<div class="t" style="left:437.18px;width:600px;text-align:center;top:423.71px;font-size:7.3px;color:#1a1a1a;font-weight:bold;letter-spacing:0.2px;">$0.41</div>
<div class="t" style="left:469.18px;width:600px;text-align:center;top:454.23px;font-size:7.3px;color:#1a1a1a;font-weight:bold;letter-spacing:0.2px;">($0.76)</div>
<div class="t" style="left:437.18px;width:600px;text-align:center;top:470.47px;font-size:7.6px;color:#555;font-weight:normal;">Africa</div>
<div class="t" style="left:-373.70px;width:600px;text-align:right;top:435.04px;font-size:7.4px;color:#555;font-weight:normal;">$0</div>
<div class="t" style="left:-373.70px;width:600px;text-align:right;top:350.79px;font-size:7.4px;color:#555;font-weight:normal;">$5</div>
<div class="t" style="left:-373.70px;width:600px;text-align:right;top:266.54px;font-size:7.4px;color:#555;font-weight:normal;">$10</div>
<div class="t" style="left:-373.70px;width:600px;text-align:right;top:182.29px;font-size:7.4px;color:#555;font-weight:normal;">$15</div>
<div class="t" style="left:204.00px;width:600px;text-align:center;top:119.29px;font-size:9.7px;color:#444;font-weight:normal;">Average Profit by Continent and Customer Group</div>
<div class="t" style="left:211.00px;width:600px;text-align:center;top:484.82px;font-size:7.3px;color:#222;font-weight:bold;">Continent Name</div>
<div class="t" style="left:203.50px;width:600px;text-align:center;top:501.32px;font-size:7.3px;color:#222;font-weight:bold;">Customer Group Name</div>
<div class="a" style="left:355.5px;top:511px;width:6px;height:7px;background:#1f97a7;border:0.8px solid #157f8e"></div>
<div class="t" style="left:364.00px;top:510.87px;font-size:7.6px;color:#666;font-weight:normal;">Internet/Catalog Customers</div>
<div class="a" style="left:464.5px;top:511px;width:6px;height:7px;background:#f38f25;border:0.8px solid #d9741a"></div>
<div class="t" style="left:473.00px;top:510.87px;font-size:7.6px;color:#666;font-weight:normal;">Orion Club Gold members</div>
<div class="a" style="left:571.5px;top:511px;width:6px;height:7px;background:#92b83a;border:0.8px solid #77a02a"></div>
<div class="t" style="left:580.00px;top:510.87px;font-size:7.6px;color:#666;font-weight:normal;">Orion Club members</div>
<div class="t" style="left:824.20px;top:95.09px;font-size:11px;color:#3c7cbd;font-weight:normal;">Options</div>
<div class="a" style="left:823.75px;top:118.3px;width:153.5px;height:13px;border:1px solid #c4c4c4;background:#fff;box-shadow:0 1px 0 #e4e4e4"></div><div class="t" style="left:829.25px;top:121.87px;font-size:7.6px;color:#333;font-weight:normal;">Average Profit by Continent and Cust...</div><svg style="left:968.0px;top:123.8px" width="4" height="2.5" viewBox="0 0 4 2.5"><path d="M0 0H4L2 2.5Z" fill="#222"/></svg>
<div class="a" style="left:969px;top:140.5px;width:8px;height:396px;background:#f1f1f1;"></div>
<svg style="left:970.5px;top:142px" width="5" height="4" viewBox="0 0 5 4"><path d="M0.5 3L2.5 1L4.5 3" fill="none" stroke="#333" stroke-width="1"/></svg>
<div class="a" style="left:969.5px;top:343px;width:7px;height:99.5px;background:#a6a6a6;"></div>
<svg style="left:970.5px;top:531px" width="5" height="4" viewBox="0 0 5 4"><path d="M0.5 1L2.5 3L4.5 1" fill="none" stroke="#333" stroke-width="1"/></svg>
<div class="t" style="left:846.30px;top:146.57px;font-size:7.6px;color:#4a4a4a;font-weight:normal;">0%</div>
<div class="a" style="left:842px;top:159px;width:110px;height:2px;background:#9c9c9c;"></div><div class="a" style="left:853.5px;top:162.3px;width:0.8px;height:2.5px;background:#aaa;"></div><div class="a" style="left:864.5px;top:162.3px;width:0.8px;height:2.5px;background:#aaa;"></div><div class="a" style="left:875.5px;top:162.3px;width:0.8px;height:2.5px;background:#aaa;"></div><div class="a" style="left:886.5px;top:162.3px;width:0.8px;height:2.5px;background:#aaa;"></div><div class="a" style="left:897.5px;top:162.3px;width:0.8px;height:2.5px;background:#aaa;"></div><div class="a" style="left:908.5px;top:162.3px;width:0.8px;height:2.5px;background:#aaa;"></div><div class="a" style="left:919.5px;top:162.3px;width:0.8px;height:2.5px;background:#aaa;"></div><div class="a" style="left:930.5px;top:162.3px;width:0.8px;height:2.5px;background:#aaa;"></div><div class="a" style="left:941.5px;top:162.3px;width:0.8px;height:2.5px;background:#aaa;"></div><div class="a" style="left:952.5px;top:162.3px;width:0.8px;height:2.5px;background:#aaa;"></div><svg style="left:838px;top:156px" width="9" height="9" viewBox="0 0 9 9"><path d="M4.5 8L1.2 4.8A3.2 3.2 0 1 1 7.8 4.8Z" fill="#fff" stroke="#999" stroke-width="0.8"/><path d="M3 3.6H6L4.5 5.2Z" fill="#222"/></svg>
<div class="t" style="left:836.00px;top:176.27px;font-size:7.6px;color:#4a4a4a;font-weight:normal;">Transparency:</div>
<div class="t" style="left:846.30px;top:193.57px;font-size:7.6px;color:#4a4a4a;font-weight:normal;">0%</div>
<div class="a" style="left:842px;top:206.6px;width:110px;height:2px;background:#9c9c9c;"></div><div class="a" style="left:853.5px;top:209.9px;width:0.8px;height:2.5px;background:#aaa;"></div><div class="a" style="left:864.5px;top:209.9px;width:0.8px;height:2.5px;background:#aaa;"></div><div class="a" style="left:875.5px;top:209.9px;width:0.8px;height:2.5px;background:#aaa;"></div><div class="a" style="left:886.5px;top:209.9px;width:0.8px;height:2.5px;background:#aaa;"></div><div class="a" style="left:897.5px;top:209.9px;width:0.8px;height:2.5px;background:#aaa;"></div><div class="a" style="left:908.5px;top:209.9px;width:0.8px;height:2.5px;background:#aaa;"></div><div class="a" style="left:919.5px;top:209.9px;width:0.8px;height:2.5px;background:#aaa;"></div><div class="a" style="left:930.5px;top:209.9px;width:0.8px;height:2.5px;background:#aaa;"></div><div class="a" style="left:941.5px;top:209.9px;width:0.8px;height:2.5px;background:#aaa;"></div><div class="a" style="left:952.5px;top:209.9px;width:0.8px;height:2.5px;background:#aaa;"></div><svg style="left:838px;top:203.6px" width="9" height="9" viewBox="0 0 9 9"><path d="M4.5 8L1.2 4.8A3.2 3.2 0 1 1 7.8 4.8Z" fill="#fff" stroke="#999" stroke-width="0.8"/><path d="M3 3.6H6L4.5 5.2Z" fill="#222"/></svg>
<div class="a" style="left:839.5px;top:227.2px;width:7.5px;height:7.5px;border:1px solid #888;background:#fff"></div>
<div class="t" style="left:852.00px;top:228.07px;font-size:7.6px;color:#4a4a4a;font-weight:normal;">Combine excluded into "All</div>
<div class="t" style="left:852.00px;top:238.17px;font-size:7.6px;color:#4a4a4a;font-weight:normal;">Other"</div>
<div class="t" style="left:836.00px;top:251.77px;font-size:7.6px;color:#4a4a4a;font-weight:normal;">Grouping style:</div>
<div class="a" style="left:836px;top:262.8px;width:26px;height:12.5px;border:1px solid #c8c8c8;background:#fff"></div>
<div class="a" style="left:836px;top:262.8px;width:13px;height:12.5px;border:1px solid #a0406a;background:#ecd2df"></div>
<svg style="left:838.5px;top:265px" width="8" height="8" viewBox="0 0 8 8"><path d="M0.5 7.5H7.5" stroke="#333" stroke-width="0.8"/><path d="M1.5 7V3M3 7V1.5M5 7V4M6.5 7V2.5" stroke="#333" stroke-width="1"/></svg>
<svg style="left:851.5px;top:265px" width="8" height="8" viewBox="0 0 8 8"><path d="M1.5 7V4M1.5 3V1.5M3.5 7V5M3.5 4V2M5.5 7V3.5M6.5 2.5V1" stroke="#333" stroke-width="1"/><path d="M0.5 7.5H7.5" stroke="#333" stroke-width="0.8"/></svg>
<div class="t" style="left:836.00px;top:284.57px;font-size:7.6px;color:#4a4a4a;font-weight:normal;">Group scale:</div>
<div class="a" style="left:836px;top:296.5px;width:117px;height:11.8px;border:1px solid #c4c4c4;background:#fff;box-shadow:0 1px 0 #e4e4e4"></div><div class="t" style="left:841.50px;top:298.87px;font-size:7.6px;color:#333;font-weight:normal;">Display actual values</div><svg style="left:944.5px;top:301.4px" width="4" height="2.5" viewBox="0 0 4 2.5"><path d="M0 0H4L2 2.5Z" fill="#222"/></svg>
<div class="t" style="left:836.00px;top:317.37px;font-size:7.6px;color:#4a4a4a;font-weight:normal;">Measure layout:</div>
<div class="a" style="left:836px;top:328.5px;width:74px;height:12px;border:1px solid #c4c4c4;background:#fff;box-shadow:0 1px 0 #e4e4e4"></div><div class="t" style="left:841.50px;top:331.07px;font-size:7.6px;color:#333;font-weight:normal;">Automatic</div><svg style="left:901.5px;top:333.5px" width="4" height="2.5" viewBox="0 0 4 2.5"><path d="M0 0H4L2 2.5Z" fill="#222"/></svg>
<div class="a" style="left:839.5px;top:353.3px;width:7.5px;height:7.5px;background:#7a1f3d"></div><svg style="left:839.5px;top:353.3px" width="8" height="8" viewBox="0 0 8 8"><path d="M1.5 4L3.2 5.7L6.5 2" fill="none" stroke="#fff" stroke-width="1.1"/></svg>
<div class="t" style="left:852.00px;top:353.87px;font-size:7.6px;color:#4a4a4a;font-weight:normal;">Data labels</div>
<div class="t" style="left:851.00px;top:369.37px;font-size:7.6px;color:#4a4a4a;font-weight:normal;">Text style:</div>
<div class="a" style="left:850px;top:380.5px;width:35px;height:12px;border:1px solid #c4c4c4;background:#fff;box-shadow:0 1px 0 #e4e4e4"></div><div class="t" style="left:855.50px;top:383.07px;font-size:7.6px;color:#333;font-weight:normal;">10</div><svg style="left:876.5px;top:385.5px" width="4" height="2.5" viewBox="0 0 4 2.5"><path d="M0 0H4L2 2.5Z" fill="#222"/></svg>
<div class="a" style="left:888.8px;top:380.5px;width:13px;height:12px;border:1px solid #b05a82;background:#ecd2df"></div>
<div class="t" style="left:892.30px;top:383.65px;font-size:7.5px;color:#7a1f3d;font-weight:bold;">B</div>
<div class="t" style="left:908.50px;top:383.23px;font-size:8px;color:#222;font-weight:normal;font-style:italic;">I</div>
<div class="a" style="left:920.6px;top:380.5px;width:12.5px;height:12px;border:1px solid #c8c8c8;background:#fff"></div>
<div class="a" style="left:923.5px;top:383.5px;width:6.5px;height:6px;background:#111;"></div>
<div class="a" style="left:839.5px;top:405.5px;width:7.5px;height:7.5px;border:1px solid #888;background:#fff"></div>
<div class="t" style="left:852.00px;top:406.07px;font-size:7.6px;color:#4a4a4a;font-weight:normal;">Segment labels</div>
<svg style="left:826.5px;top:434.5px" width="4" height="6" viewBox="0 0 4 6"><path d="M0.5 0.5L3 3L0.5 5.5" fill="none" stroke="#444" stroke-width="0.9"/></svg>
<div class="t" style="left:835.00px;top:433.77px;font-size:7.6px;color:#444;font-weight:normal;">X Axis Options</div>
<svg style="left:825.5px;top:452px" width="6" height="4" viewBox="0 0 6 4"><path d="M0.5 0.5L3 3L5.5 0.5" fill="none" stroke="#444" stroke-width="0.9"/></svg>
<div class="t" style="left:834.80px;top:450.17px;font-size:7.6px;color:#444;font-weight:normal;">Y Axis Options</div>
<div class="a" style="left:839.3px;top:465.70px;width:7.5px;height:7.5px;border:1px solid #a8a8a8;background:#fff"></div>
<div class="t" style="left:851.60px;top:466.67px;font-size:7.6px;color:#8c8c8c;font-weight:normal;">Fixed minimum</div>
<div class="a" style="left:839.3px;top:484.70px;width:7.5px;height:7.5px;border:1px solid #a8a8a8;background:#fff"></div>
<div class="t" style="left:851.60px;top:485.67px;font-size:7.6px;color:#8c8c8c;font-weight:normal;">Fixed maximum</div>
<div class="a" style="left:839.3px;top:503.50px;width:7.5px;height:7.5px;border:1px solid #a8a8a8;background:#fff"></div>
<div class="t" style="left:851.60px;top:504.47px;font-size:7.6px;color:#8c8c8c;font-weight:normal;">Axis label</div>
<div class="a" style="left:839.3px;top:522.30px;width:7.5px;height:7.5px;border:1px solid #a8a8a8;background:#fff"></div>
<div class="t" style="left:851.60px;top:523.27px;font-size:7.6px;color:#8c8c8c;font-weight:normal;">Axis line</div>
<svg style="left:970px;top:392px" width="8" height="12" viewBox="0 0 8 12"><path d="M0.5 0.5V10L2.8 7.8L4.5 11.3L6 10.6L4.4 7.3H7.5Z" fill="#fff" stroke="#111" stroke-width="0.8"/></svg>
<div class="a" style="left:0px;top:545px;width:1008px;height:22px;background:#0c111b;"></div>
<svg style="left:7px;top:551px" width="10" height="10" viewBox="0 0 10 10"><path d="M0 1.3L4.2 0.7V4.7H0ZM4.8 0.6L10 0V4.7H4.8ZM0 5.3H4.2V9.3L0 8.7ZM4.8 5.3H10V10L4.8 9.4Z" fill="#fff"/></svg>
<svg style="left:33px;top:551px" width="10" height="10" viewBox="0 0 10 10"><circle cx="6" cy="4" r="3.2" fill="none" stroke="#eee" stroke-width="1"/><path d="M3.7 6.3L0.7 9.3" stroke="#eee" stroke-width="1.1"/></svg>
<svg style="left:56px;top:551px" width="12" height="10" viewBox="0 0 12 10"><rect x="2.5" y="1" width="7" height="8" fill="none" stroke="#ddd" stroke-width="0.9"/><path d="M0.7 2V8M11.3 2V8" stroke="#ddd" stroke-width="0.9"/></svg>
<svg style="left:83px;top:549.5px" width="13" height="13" viewBox="0 0 13 13"><path d="M10.8 7.3H4.2C4.3 9 5.4 10 6.8 10C7.9 10 8.7 9.4 9.1 8.7H10.7C10.1 10.6 8.6 11.7 6.8 11.7C4.4 11.7 2.6 9.8 2.6 7.2C2.6 4.6 4.4 2.8 6.8 2.8C9.1 2.8 10.8 4.6 10.8 7.1ZM4.2 6.1H9.2C9.1 4.9 8.1 4.1 6.8 4.1C5.5 4.1 4.5 4.9 4.2 6.1Z" fill="#3aa0e0"/><path d="M1.5 11.5C0 10 2.5 4.5 7 2.5C10.5 1 12.5 1.5 11.8 3.5" fill="none" stroke="#f0c030" stroke-width="0.9"/></svg>
<svg style="left:109px;top:550.5px" width="12" height="11" viewBox="0 0 12 11"><path d="M0.5 1.5H4.5L5.5 2.5H11.5V10H0.5Z" fill="#f3d47a"/><rect x="0.5" y="4" width="11" height="6" fill="#f8e3a0"/><rect x="3" y="6" width="6" height="3" fill="#4aa0d8"/></svg>
<div class="a" style="left:128px;top:545px;width:25px;height:22px;background:#3c3f4c;"></div>
<div class="a" style="left:128px;top:565.5px;width:25px;height:1.5px;background:#a8c8d0;"></div>
<svg style="left:134.5px;top:550.5px" width="13" height="13" viewBox="0 0 13 13"><circle cx="6.5" cy="6.5" r="6" fill="#e63a2a"/><path d="M6.5 0.5A6 6 0 0 1 12.5 6.5A6 6 0 0 1 6.5 12.5A4.5 4.5 0 0 0 11 7A4.5 4.5 0 0 0 6.5 2.5Z" fill="#f8a030"/><path d="M7 0.8C9.5 1.5 11.5 3.5 12 6C10.5 3.5 8.5 2.5 7 2.5Z" fill="#f3e08a"/><circle cx="6.8" cy="6.3" r="2.6" fill="#3b6fc8"/><path d="M1 6C1.5 3 3.5 1 6 0.7C4.5 2 4 4 5 5.5" fill="#d83030"/></svg>
<svg style="left:877px;top:553px" width="8" height="5" viewBox="0 0 8 5"><path d="M0.7 4.3L4 1L7.3 4.3" fill="none" stroke="#ddd" stroke-width="0.9"/></svg>
<svg style="left:890px;top:550px" width="10" height="11" viewBox="0 0 10 11"><path d="M1 4H3L5.5 1.5V9.5L3 7H1Z" fill="none" stroke="#eee" stroke-width="0.9"/><rect x="5.8" y="5.5" width="3.6" height="3.6" fill="#e8502a"/></svg>
<svg style="left:902px;top:550px" width="11" height="10" viewBox="0 0 11 10"><path d="M3 1.5H10.5V7H6M1 3V9M1 3H3.5V9" fill="none" stroke="#eee" stroke-width="0.9"/></svg>
<svg style="left:917px;top:550px" width="10" height="10" viewBox="0 0 10 10"><path d="M1.5 8.5L3.5 6.5M6.5 3.5L8.5 1.5M3 4.5L5.5 7M4.5 3L7 5.5" fill="none" stroke="#eee" stroke-width="1"/><circle cx="3" cy="7" r="1.6" fill="none" stroke="#eee" stroke-width="0.9"/><circle cx="7" cy="3" r="1.6" fill="none" stroke="#eee" stroke-width="0.9"/></svg>
<svg style="left:931px;top:551.5px" width="13" height="8" viewBox="0 0 13 8"><rect x="0.5" y="0.5" width="12" height="7" rx="1" fill="none" stroke="#ddd" stroke-width="0.9"/><path d="M2.5 2.5H10.5M2.5 4H10.5M3.5 5.5H9.5" stroke="#ccc" stroke-width="0.7" stroke-dasharray="1 0.6"/></svg>
<div class="t" style="left:663.50px;width:600px;text-align:center;top:548.20px;font-size:6.5px;color:#fff;font-weight:normal;">11:18 AM</div>
<div class="t" style="left:663.50px;width:600px;text-align:center;top:557.50px;font-size:6.5px;color:#fff;font-weight:normal;">5/7/2019</div>
<svg style="left:986px;top:550.5px" width="10" height="10" viewBox="0 0 10 10"><path d="M0.5 0.5H9.5V7H6L5 8.5L4 7H0.5Z" fill="none" stroke="#eee" stroke-width="0.9"/></svg>
</div>
<svg style="left:0;top:0" width="1200" height="675" viewBox="0 0 1200 675"><path transform="matrix(0 1 -1 0 1127 159.3)" d="M0,1.85 H30 M15,1.85 V41 M36.9,0 V25.6 A13.7,13.7 0 0 0 64.5,25.6 V0 M71.4,1.85 H102.5 M87,1.85 V41 M123.75,20.5 m-18.6,0 a18.6,18.75 0 1 0 37.2,0 a18.6,18.75 0 1 0 -37.2,0 M151.4,41 V1.85 H162.5 A10.2,10.2 0 0 1 162.5,22.4 H151.4 M162,22.4 L176,41 M186.8,0 V41 M194.8,41 L212.7,0.5 L230.6,41 M200.5,28.5 H224.9 M238,0 V39.15 H260.7" fill="none" stroke="#c2d2c9" stroke-width="3.7" stroke-linejoin="miter"/></svg>
<svg style="left:0;top:0" width="1200" height="675" viewBox="0 0 1200 675"><g transform="translate(1060.2 620.7)" fill="#fff"><path d="M16.9,-16.5 C12,-24 4,-27 -2,-26.5 C-12,-25.5 -19,-17 -18.2,-8.5 C-17.8,-3.5 -15.5,0.5 -13,3.2 L-5.3,11 A4,4 0 0 0 0.3,5.3 L-7.5,-2 C-9.5,-4.5 -10,-8 -8.5,-11.5 C-6,-17.5 1,-21 7,-20.5 C11,-20 14.5,-18.5 16.9,-16.5 Z"/><path d="M16.9,-16.5 C12,-24 4,-27 -2,-26.5 C-12,-25.5 -19,-17 -18.2,-8.5 C-17.8,-3.5 -15.5,0.5 -13,3.2 L-5.3,11 A4,4 0 0 0 0.3,5.3 L-7.5,-2 C-9.5,-4.5 -10,-8 -8.5,-11.5 C-6,-17.5 1,-21 7,-20.5 C11,-20 14.5,-18.5 16.9,-16.5 Z" transform="rotate(180)"/></g></svg>
<div class="t" style="left:1082px;top:577.2px;font-size:71px;color:#fff;transform:scaleX(0.85);transform-origin:0 0;-webkit-text-stroke:1.3px #fff;letter-spacing:-1px">sas</div>
<div class="a" style="left:1168.5px;top:634px;width:4px;height:4px;border-radius:50%;background:rgba(255,255,255,0.6)"></div>
<div class="a" style="left:1075.5px;top:634px;width:4px;height:4px;border-radius:50%;background:rgba(255,255,255,0.6)"></div>
</body></html>
